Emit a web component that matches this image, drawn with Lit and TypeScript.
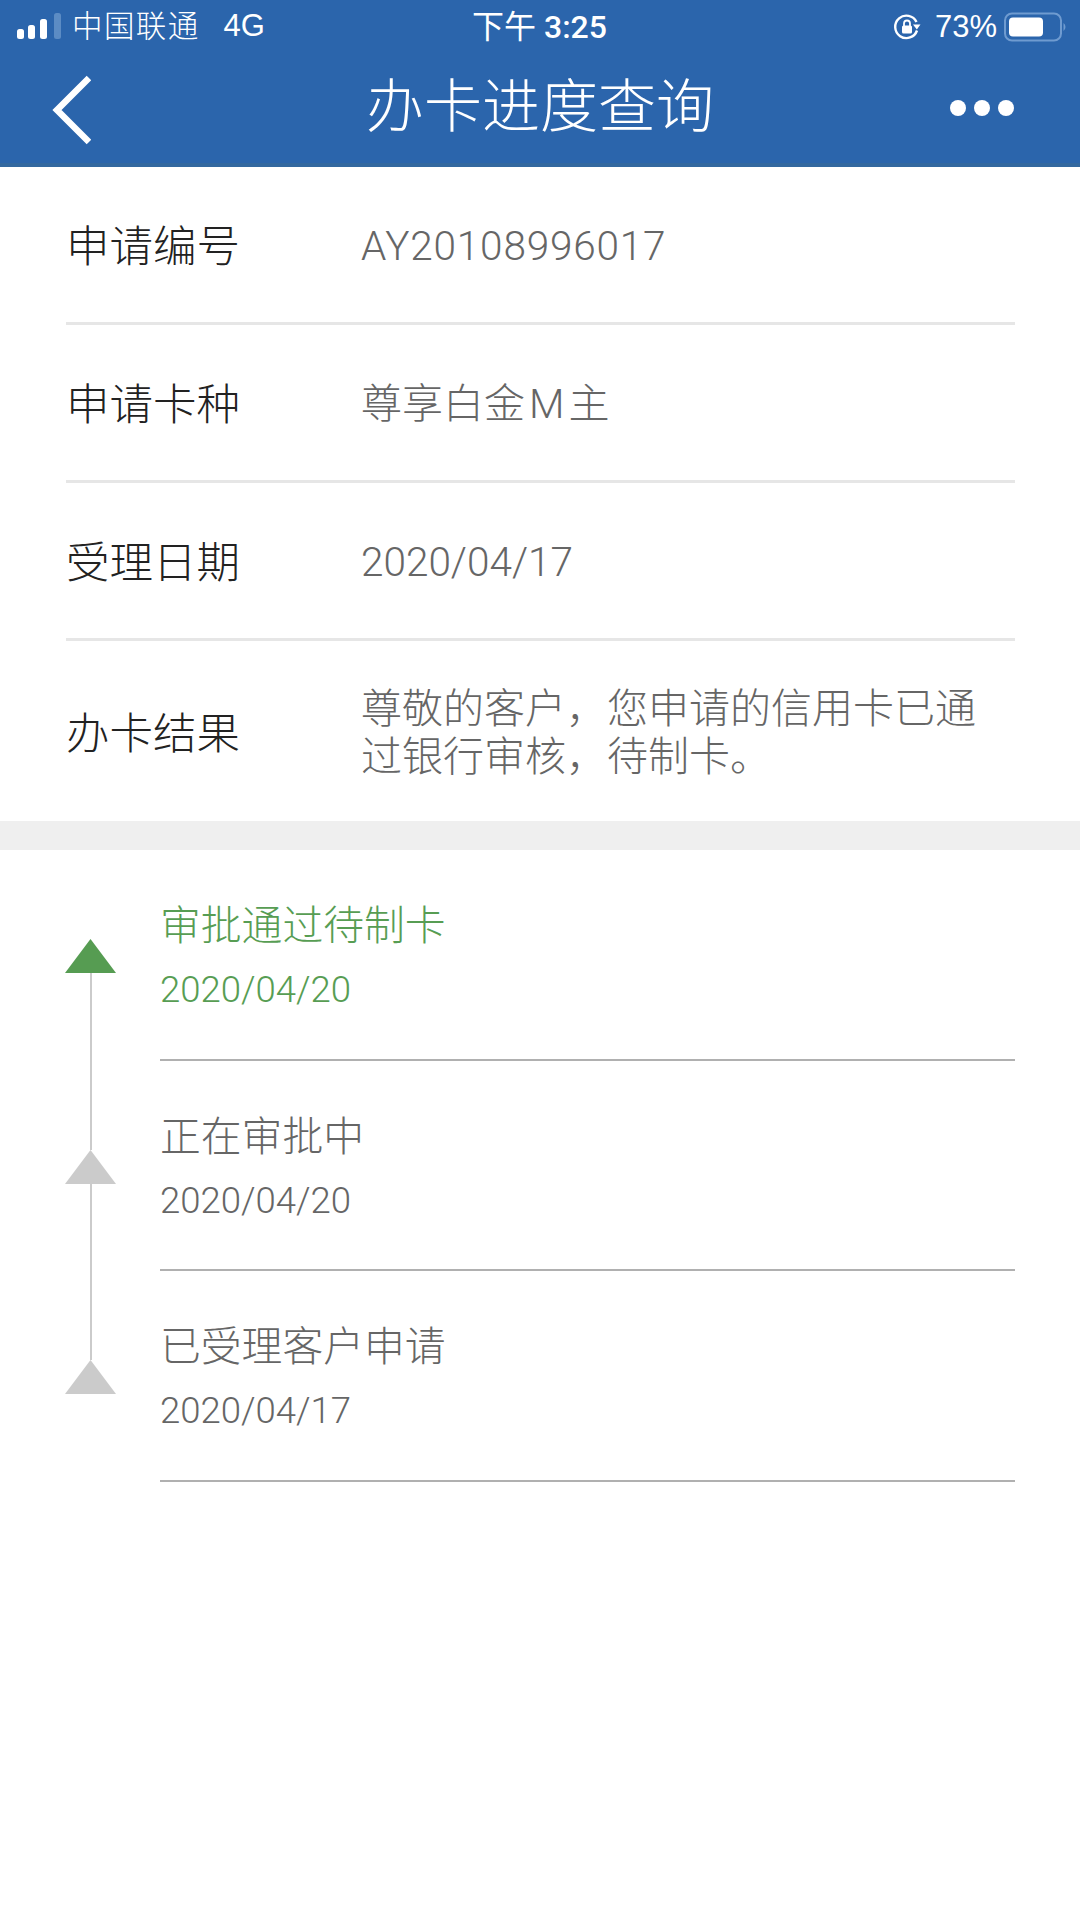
import { LitElement, html, css, svg } from "lit";
import { customElement } from "lit/decorators.js";

const infoRows = [
  { label: "申请编号", value: "AY20108996017", kind: "code" },
  { label: "申请卡种", value: "尊享白金 M 主", kind: "" },
  { label: "受理日期", value: "2020/04/17", kind: "date" },
  { label: "办卡结果", value: "尊敬的客户，您申请的信用卡已通过银行审核，待制卡。", kind: "" },
];

const steps = [
  { title: "审批通过待制卡", date: "2020/04/20", active: true },
  { title: "正在审批中", date: "2020/04/20", active: false },
  { title: "已受理客户申请", date: "2020/04/17", active: false },
];

@customElement("app-root")
export class AppRoot extends LitElement {
  static styles = css`
    :host {
      display: block;
      width: 1080px;
      height: 1920px;
      background: #fff;
      font-family: "Liberation Sans", "Noto Sans CJK SC", sans-serif;
      overflow: hidden;
    }
    .header {
      height: 167px;
      box-sizing: border-box;
      background: #2b65ac;
      border-bottom: 4px solid #33689f;
      color: #fff;
    }
    .status {
      height: 57px;
      display: flex;
      align-items: center;
      justify-content: space-between;
      padding: 0 14px 4px 17px;
      box-sizing: border-box;
      position: relative;
    }
    .status-left, .status-right { display: flex; align-items: center; }
    .carrier { font-size: 30.500px; font-weight: 300; margin-left: 11px; letter-spacing: 1.400px; line-height: 44px; margin-top: -2px; }
    .net { font-size: 31px; margin-left: 24px; margin-top: -2px; }
    .time {
      position: absolute;
      left: 472px;
      top: 5px;
      font-family: Roboto, "Noto Sans CJK SC", sans-serif;
      font-size: 32px;
      line-height: 44px;
    }
    .clock { font-weight: 500; }
    .pct { font-size: 31px; margin: 0 7px 0 14px; }
    .nav {
      height: 106px;
      display: grid;
      grid-template-columns: 1fr auto 1fr;
      align-items: center;
      padding: 0 66px 4px;
      box-sizing: border-box;
    }
    .back { margin-left: -19px; margin-top: 3px; }
    .more { justify-self: end; }
    .title { font-size: 58px; font-weight: 300; line-height: 1; margin-bottom: 12px; font-family: "Noto Sans CJK SC", sans-serif; }
    .row {
      margin: 0 65px 0 66px;
      display: flex;
      align-items: center;
      height: 155px;
      border-bottom: 3px solid #e6e6e6;
    }
    .row.last { height: 180px; border-bottom: none; }
    .label { width: 295px; flex: none; font-size: 43.500px; font-weight: 300; color: #222; font-family: "Noto Sans CJK SC", sans-serif; margin-top: -2px; }
    .value {
      font-family: Roboto, "Noto Sans CJK SC", sans-serif;
      font-size: 41px;
      color: #666;
      font-weight: 300;
      line-height: 48.500px;
      word-spacing: -6px;
      margin-top: 4px;
    }
    .value.date { font-size: 40.500px; }
    .value.code { font-size: 40.500px; letter-spacing: 0.800px; }
    .band { height: 29px; background: #efefef; }
    .step { display: flex; height: 210.600px; }
    .rail {
      width: 160px;
      flex: none;
      display: flex;
      flex-direction: column;
      padding-left: 65px;
      box-sizing: border-box;
    }
    .seg { width: 2px; margin-left: 24.500px; background: #cbcbcb; }
    .seg.top { height: 89px; }
    .seg.bottom { flex: 1; }
    .seg.none { background: transparent; }
    .tri { display: block; width: 51px; height: 34px; flex: none; }
    .content {
      width: 855px;
      box-sizing: border-box;
      border-bottom: 2px solid #b0b0b0;
      color: #666;
      padding-top: 52px;
    }
    .content.active { color: #579d53; }
    .step-title { font-size: 40.800px; font-weight: 300; line-height: 48px; }
    .step-date { font-family: Roboto, sans-serif; font-weight: 300; font-size: 36.500px; line-height: 48px; margin-top: 16px; }
  `;

  private signal() {
    return html`<svg width="44" height="30" viewBox="0 0 44 30">
      <rect x="0" y="17" width="7" height="10" rx="2.5" fill="#fff"/>
      <rect x="11" y="13" width="7" height="14" rx="2.5" fill="#fff"/>
      <rect x="23" y="7" width="7" height="20" rx="2.5" fill="#fff"/>
      <rect x="37" y="1" width="7" height="26" rx="2.5" fill="#5c8cc4"/>
    </svg>`;
  }

  private rotation() {
    return html`<svg width="28" height="28" viewBox="0 0 28 28" fill="none">
      <path d="M24 17.500A11.200 11.200 0 1 1 23.500 9" stroke="#fff" stroke-width="2.400"/>
      <path d="M20 11.500h7.500l-3.700 5z" fill="#fff"/>
      <rect x="9" y="12.500" width="10" height="8" rx="1.500" fill="#fff"/>
      <path d="M11 13v-2.500a3 3 0 0 1 6 0V13" stroke="#fff" stroke-width="1.800"/>
    </svg>`;
  }

  private battery() {
    return html`<svg width="62" height="30" viewBox="0 0 62 30" fill="none">
      <rect x="1" y="1.500" width="56" height="27" rx="7" stroke="#6f9bd0" stroke-width="2"/>
      <rect x="5" y="5.500" width="34" height="19" rx="4" fill="#fff"/>
      <path d="M59.500 11a5 5 0 0 1 0 8z" fill="#6f9bd0"/>
    </svg>`;
  }

  private tri(color: string) {
    return svg`<svg class="tri" viewBox="0 0 51 34"><path d="M25.500 0L51 34H0z" fill="${color}"/></svg>`;
  }

  render() {
    return html`
      <div class="header">
        <div class="status">
          <div class="status-left">
            ${this.signal()}
            <span class="carrier">中国联通</span>
            <span class="net">4G</span>
          </div>
          <span class="time">下午 <span class="clock">3:25</span></span>
          <div class="status-right">
            ${this.rotation()}
            <span class="pct">73%</span>
            ${this.battery()}
          </div>
        </div>
        <div class="nav">
          <svg class="back" width="44" height="72" viewBox="0 0 44 72" fill="none">
            <path d="M42 4L10 36l32 32" stroke="#fff" stroke-width="6.500"/>
          </svg>
          <div class="title">办卡进度查询</div>
          <svg class="more" width="64" height="18" viewBox="0 0 64 18">
            <circle cx="8" cy="9" r="8" fill="#fff"/>
            <circle cx="32" cy="9" r="8" fill="#fff"/>
            <circle cx="56" cy="9" r="8" fill="#fff"/>
          </svg>
        </div>
      </div>
      ${infoRows.map(
        (r, i) => html`<div class="row ${i === infoRows.length - 1 ? "last" : ""}">
          <div class="label">${r.label}</div>
          <div class="value ${r.kind}">${r.value}</div>
        </div>`
      )}
      <div class="band"></div>
      ${steps.map(
        (s, i) => html`<div class="step">
          <div class="rail">
            <div class="seg top ${i === 0 ? "none" : ""}"></div>
            ${this.tri(s.active ? "#569c52" : "#cbcbcb")}
            <div class="seg bottom ${i === steps.length - 1 ? "none" : ""}"></div>
          </div>
          <div class="content ${s.active ? "active" : ""}">
            <div class="step-title">${s.title}</div>
            <div class="step-date">${s.date}</div>
          </div>
        </div>`
      )}
    `;
  }
}
